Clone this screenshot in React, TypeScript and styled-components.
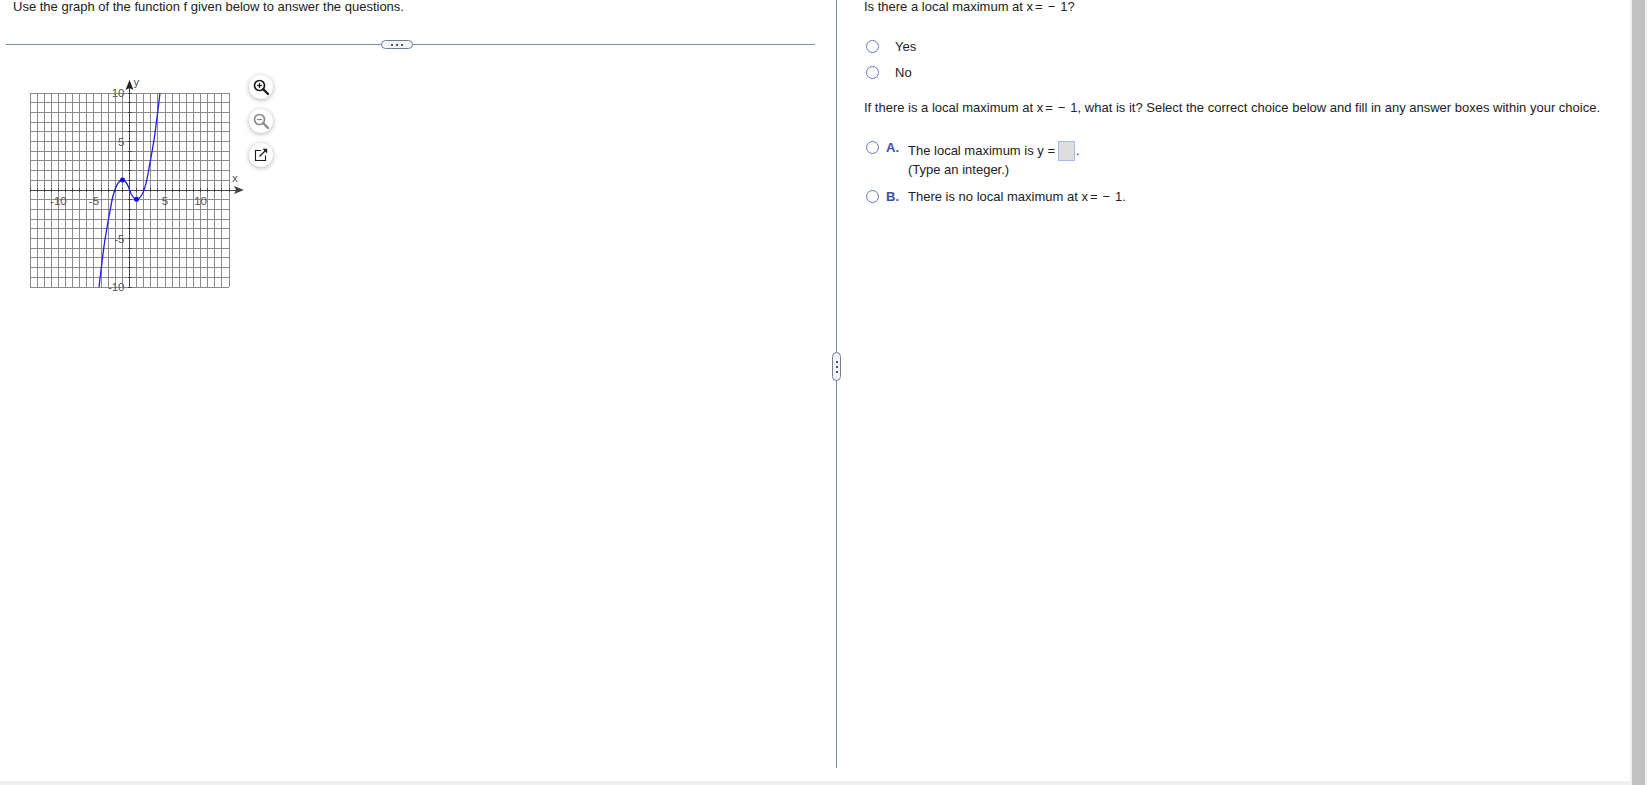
import React from "react";
import styled, { createGlobalStyle } from "styled-components";

const GlobalStyle = createGlobalStyle`
  html, body {
    margin: 0;
    padding: 0;
    height: 100%;
    overflow: hidden;
    background: #fff;
  }
  body {
    font-family: "Liberation Sans", Arial, sans-serif;
    font-size: 13px;
    color: #222;
  }
`;

const Page = styled.div`
  display: flex;
  width: 1647px;
  height: 785px;
  background: #f0f0f0;
`;

const Content = styled.div`
  display: flex;
  flex-direction: column;
  width: 1630px;
  height: 785px;
`;

const Panes = styled.main`
  display: flex;
  height: 781px;
  background: #fff;
`;

const ScrollTrack = styled.div`
  width: 17px;
  padding: 0 2px;
  box-sizing: border-box;
`;

const ScrollThumb = styled.div`
  height: 100%;
  background: #c1c1c1;
`;

const LeftPane = styled.section`
  width: 836px;
  padding: 0 21px 0 6px;
  box-sizing: border-box;
`;

const Prompt = styled.p`
  margin: 0;
  padding: 0 0 0 7px;
  height: 44px;
  line-height: 14px;
`;

const HorizontalRule = styled.div`
  position: relative;
  height: 1px;
  background: #7d8ea3;
`;

const HorizontalHandle = styled.div`
  position: absolute;
  left: 375px;
  top: -4px;
  width: 32px;
  height: 9px;
  box-sizing: border-box;
  border: 1px solid #6f8095;
  border-radius: 5px;
  background: #f3f5f8;
  display: flex;
  align-items: center;
  justify-content: center;
  gap: 3px;
`;

const VerticalRule = styled.div`
  position: relative;
  width: 1px;
  height: 768px;
  background: #7d8ea3;
`;

const VerticalHandle = styled.div`
  position: absolute;
  left: -4px;
  top: 352px;
  width: 9px;
  height: 29px;
  box-sizing: border-box;
  border: 1px solid #6f8095;
  border-radius: 5px;
  background: #f3f5f8;
  display: flex;
  flex-direction: column;
  align-items: center;
  justify-content: center;
  gap: 3px;
`;

const HandleDot = styled.span`
  width: 2px;
  height: 2px;
  background: #4a5462;
`;

const GraphRow = styled.div`
  display: flex;
  align-items: flex-start;
  padding-top: 24px;
`;

const GraphSvg = styled.svg`
  display: block;
  margin-left: 12px;
  flex: none;
`;

const ToolColumn = styled.div`
  display: flex;
  flex-direction: column;
  gap: 10px;
  margin-left: 3px;
  padding-top: 6px;
`;

const ToolButton = styled.button<{ $muted?: boolean }>`
  width: 24px;
  height: 24px;
  padding: 0;
  border: none;
  border-radius: 50%;
  background: #fff;
  box-shadow: 0 1px 5px rgba(0, 0, 0, 0.3);
  color: ${(p) => (p.$muted ? "#8a8a8a" : "#1c1c1c")};
  display: flex;
  align-items: center;
  justify-content: center;
`;

const RightPane = styled.section`
  flex: 1;
  padding-left: 27px;
`;

const Question = styled.p`
  margin: 0;
  height: 33px;
  line-height: 14px;
`;

const OptionRow = styled.label<{ $height: number }>`
  display: flex;
  align-items: center;
  height: ${(p) => p.$height}px;
`;

const Radio = styled.span`
  flex: none;
  width: 13px;
  height: 13px;
  margin-left: 2px;
  box-sizing: border-box;
  border: 1.5px solid #5f79c4;
  border-radius: 50%;
  background: #fff;
`;

const OptionLabel = styled.span`
  margin-left: 16px;
`;

const SubQuestion = styled.p`
  margin: 0;
  padding-top: 15px;
  height: 55px;
  box-sizing: border-box;
  line-height: 14px;
`;

const ChoiceList = styled.div`
  display: flex;
  flex-direction: column;
  gap: 13px;
`;

const Choice = styled.div`
  display: flex;
  align-items: flex-start;
`;

const ChoiceLetter = styled.span`
  width: 22px;
  margin-left: 7px;
  color: #3f4fa8;
  font-weight: 700;
  line-height: 14px;
`;

const ChoiceBody = styled.div`
  display: flex;
  flex-direction: column;
  gap: 2px;
`;

const ChoiceLine = styled.div`
  display: flex;
  align-items: center;
  min-height: 14px;
  line-height: 14px;
  white-space: pre;
`;

const AnswerBox = styled.span`
  width: 17px;
  height: 20px;
  margin: 0 1px 0 3px;
  box-sizing: border-box;
  border: 1px solid #a3bbe8;
  background: #dedede;
`;

const MathPart = styled.span<{ $gap: number }>`
  margin-left: ${(p) => p.$gap}px;
`;

const MinusOne = ({ tail }: { tail: string }) => (
  <>
    <MathPart $gap={0}>x</MathPart>
    <MathPart $gap={2}>=</MathPart>
    <MathPart $gap={5}>−</MathPart>
    <MathPart $gap={5}>1</MathPart>
    {tail}
  </>
);

// plot geometry, in svg pixels
const X0 = 12;
const X1 = 211;
const Y0 = 0;
const Y1 = 194;
const UNIT_X = (X1 - X0) / 28;
const UNIT_Y = (Y1 - Y0) / 20;
const AXIS_X = X0 + 14 * UNIT_X;
const AXIS_Y = Y0 + 10 * UNIT_Y;
const OFFSET_X = 18;
const OFFSET_Y = 93;

const tracedCurve: [number, number][] = [
  [99, 287],
  [103.7, 248.4],
  [106.7, 229.4],
  [109.7, 212.7],
  [113, 196],
  [117.3, 184.4],
  [122.5, 180],
  [127.3, 184.3],
  [131.7, 195],
  [136.5, 199.3],
  [141.7, 195],
  [146, 183.3],
  [149.3, 166.7],
  [152.3, 150],
  [155.3, 131],
  [160, 93],
];

const curvePath = () => {
  const pts = tracedCurve.map(([x, y]) => [x - OFFSET_X, y - OFFSET_Y]);
  let d = `M${pts[0][0]} ${pts[0][1]}`;
  for (let i = 0; i < pts.length - 1; i++) {
    const a = pts[Math.max(i - 1, 0)];
    const b = pts[i];
    const c = pts[i + 1];
    const e = pts[Math.min(i + 2, pts.length - 1)];
    const c1x = b[0] + (c[0] - a[0]) / 6;
    const c1y = b[1] + (c[1] - a[1]) / 6;
    const c2x = c[0] - (e[0] - b[0]) / 6;
    const c2y = c[1] - (e[1] - b[1]) / 6;
    d += ` C${c1x} ${c1y} ${c2x} ${c2y} ${c[0]} ${c[1]}`;
  }
  return d;
};

const xLabels = [
  { t: "-10", v: -10 },
  { t: "-5", v: -5 },
  { t: "5", v: 5 },
  { t: "10", v: 10 },
];
const yLabels = [
  { t: "10", v: 10 },
  { t: "5", v: 5 },
  { t: "-5", v: -5 },
  { t: "-10", v: -10 },
];

const Graph = () => {
  const verticals = Array.from({ length: 29 }, (_, i) => X0 + i * UNIT_X);
  const horizontals = Array.from({ length: 21 }, (_, i) => Y0 + i * UNIT_Y);
  return (
    <GraphSvg width="228" height="230" viewBox="0 -24 228 230">
      <g shapeRendering="crispEdges" stroke="#8a8a8a" strokeWidth="1">
        {verticals.map((x) => (
          <line key={x} x1={x} x2={x} y1={Y0} y2={Y1} />
        ))}
        {horizontals.map((y) => (
          <line key={y} x1={X0} x2={X1} y1={y} y2={y} />
        ))}
      </g>
      <g shapeRendering="crispEdges" stroke="#444" strokeWidth="1">
        <line x1={X0} x2={X1 + 8} y1={AXIS_Y} y2={AXIS_Y} />
        <line x1={AXIS_X} x2={AXIS_X} y1={Y1} y2={-6} />
        {verticals.map((x) => (
          <line key={x} x1={x} x2={x} y1={AXIS_Y - 2} y2={AXIS_Y + 2} />
        ))}
        {horizontals.map((y) => (
          <line key={y} x1={AXIS_X - 2} x2={AXIS_X + 2} y1={y} y2={y} />
        ))}
      </g>
      <path d={`M${AXIS_X} -13 L${AXIS_X + 4} -3 L${AXIS_X} -5 L${AXIS_X - 4} -3 Z`} fill="#222" />
      <path d={`M226 ${AXIS_Y} L216 ${AXIS_Y - 4} L218 ${AXIS_Y} L216 ${AXIS_Y + 4} Z`} fill="#444" />
      <g fontFamily="Liberation Sans, Arial, sans-serif" fontSize="11.5" fill="#555">
        {xLabels.map((l) => (
          <text key={l.t} x={AXIS_X + l.v * UNIT_X} y={AXIS_Y + 15} textAnchor="middle">
            {l.t}
          </text>
        ))}
        {yLabels.map((l) => (
          <text key={l.t} x={AXIS_X - 5} y={AXIS_Y - l.v * UNIT_Y + 4} textAnchor="end">
            {l.t}
          </text>
        ))}
        <text x={AXIS_X + 4} y={-7}>y</text>
        <text x={214} y={AXIS_Y - 8}>x</text>
      </g>
      <path d={curvePath()} fill="none" stroke="#1d1df0" strokeWidth="1.3" />
      <circle cx={122.5 - OFFSET_X} cy={180 - OFFSET_Y} r="2.5" fill="#1010e8" />
      <circle cx={136.5 - OFFSET_X} cy={199.3 - OFFSET_Y} r="2.5" fill="#1010e8" />
    </GraphSvg>
  );
};

const Magnifier = ({ plus }: { plus?: boolean }) => (
  <svg width="18" height="18" viewBox="0 0 18 18" fill="none" stroke="currentColor">
    <circle cx="7.5" cy="7.5" r="5" strokeWidth="1.7" />
    <path d="M11.2 11.2 L16 16" strokeWidth="2.4" strokeLinecap="round" />
    <path d="M5 7.5 H10" strokeWidth="1.3" />
    {plus && <path d="M7.5 5 V10" strokeWidth="1.3" />}
  </svg>
);

const PopOut = () => (
  <svg width="14" height="14" viewBox="0 0 14 14" fill="none" stroke="currentColor">
    <path d="M7 2.5 H1.5 V12.5 H11.5 V7.5" strokeWidth="1.1" />
    <path d="M5.5 8.5 L11 3" strokeWidth="1.3" />
    <path d="M8.5 0.8 H13.2 V5.5 Z" fill="currentColor" stroke="none" />
  </svg>
);

const App = () => (
  <Page>
    <GlobalStyle />
    <Content>
      <Panes>
        <LeftPane>
          <Prompt>Use the graph of the function f given below to answer the questions.</Prompt>
          <HorizontalRule>
            <HorizontalHandle>
              <HandleDot />
              <HandleDot />
              <HandleDot />
            </HorizontalHandle>
          </HorizontalRule>
          <GraphRow>
            <Graph />
            <ToolColumn>
              <ToolButton>
                <Magnifier plus />
              </ToolButton>
              <ToolButton $muted>
                <Magnifier />
              </ToolButton>
              <ToolButton>
                <PopOut />
              </ToolButton>
            </ToolColumn>
          </GraphRow>
        </LeftPane>
        <VerticalRule>
          <VerticalHandle>
            <HandleDot />
            <HandleDot />
            <HandleDot />
          </VerticalHandle>
        </VerticalRule>
        <RightPane>
          <Question>
            Is there a local maximum at <MinusOne tail="?" />
          </Question>
          <OptionRow $height={26}>
            <Radio />
            <OptionLabel>Yes</OptionLabel>
          </OptionRow>
          <OptionRow $height={27}>
            <Radio />
            <OptionLabel>No</OptionLabel>
          </OptionRow>
          <SubQuestion>
            If there is a local maximum at <MinusOne tail=", what is it? Select the correct choice below and fill in any answer boxes within your choice." />
          </SubQuestion>
          <ChoiceList>
            <Choice>
              <Radio />
              <ChoiceLetter>A.</ChoiceLetter>
              <ChoiceBody>
                <ChoiceLine>
                  The local maximum is y =<AnswerBox />.
                </ChoiceLine>
                <ChoiceLine>(Type an integer.)</ChoiceLine>
              </ChoiceBody>
            </Choice>
            <Choice>
              <Radio />
              <ChoiceLetter>B.</ChoiceLetter>
              <ChoiceBody>
                <ChoiceLine>
                  There is no local maximum at <MinusOne tail="." />
                </ChoiceLine>
              </ChoiceBody>
            </Choice>
          </ChoiceList>
        </RightPane>
      </Panes>
    </Content>
    <ScrollTrack>
      <ScrollThumb />
    </ScrollTrack>
  </Page>
);

export default App;
